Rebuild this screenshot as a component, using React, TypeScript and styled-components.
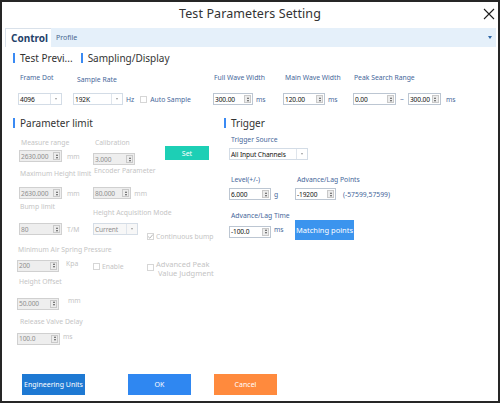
import styled, { createGlobalStyle } from "styled-components";

const GlobalStyle = createGlobalStyle`
  html, body {
    margin: 0;
    padding: 0;
    background: #fff;
  }
  body {
    font-family: "Noto Sans", "Open Sans", Arial, sans-serif;
  }
`;

const LABEL = "#46679a";
const OFF_LABEL = "#c4c4c4";

type Tone = { $off?: boolean };

const Spinner = ({ value, w, off }: { value: string; w: number; off?: boolean }) => (
  <SpinBox $w={w} $off={off}>
    <BoxText $off={off}>{value}</BoxText>
    <SpinButtons>
      <Arrow $dir="up" />
      <Arrow $dir="down" />
    </SpinButtons>
  </SpinBox>
);

const Select = ({ value, w, off }: { value: string; w: number; off?: boolean }) => (
  <SelectBox $w={w} $off={off}>
    <BoxText $off={off}>{value}</BoxText>
    <SelectArrow>
      <Arrow $dir="down" $light />
    </SelectArrow>
  </SelectBox>
);

const Check = ({ checked, ml }: { checked?: boolean; ml?: number }) => (
  <CheckBox $ml={ml}>
    {checked && (
      <svg width="7" height="7" viewBox="0 0 7 7">
        <path d="M1.2 3.6 L2.8 5.2 L5.8 1.6" fill="none" stroke="#b5b5b5" strokeWidth="1" />
      </svg>
    )}
  </CheckBox>
);

const App = () => {
  return (
    <>
      <GlobalStyle />
      <Dialog>
        <TitleBar>
          <span />
          <Title>Test Parameters Setting</Title>
          <CloseButton>
            <svg width="12" height="12" viewBox="0 0 12 12">
              <path d="M1 1 L11 11 M11 1 L1 11" stroke="#1e1e1e" strokeWidth="1.1" />
            </svg>
          </CloseButton>
        </TitleBar>

        <TabBar>
          <Tab $active>Control</Tab>
          <Tab>Profile</Tab>
          <TabSpacer />
          <TabMenu />
        </TabBar>

        <Body>
          <HeadingRow>
            <Heading>Test Previ...</Heading>
            <Heading>Sampling/Display</Heading>
          </HeadingRow>

          <SamplingRow>
            <Field>
              <Label $indent={2}>Frame Dot</Label>
              <Controls $mt={11}>
                <Select value="4096" w={44} />
              </Controls>
            </Field>
            <Field>
              <Label $indent={4} $mt={2}>Sample Rate</Label>
              <Controls $mt={9}>
                <Select value="192K" w={50} />
                <Unit $ml={3}>Hz</Unit>
                <Check ml={6} />
                <Unit $ml={3}>Auto Sample</Unit>
              </Controls>
            </Field>
            <Field>
              <Label $indent={1}>Full Wave Width</Label>
              <Controls $mt={11}>
                <Spinner value="300.00" w={40} />
                <Unit $ml={3}>ms</Unit>
              </Controls>
            </Field>
            <Field>
              <Label $indent={2}>Main Wave Width</Label>
              <Controls $mt={11}>
                <Spinner value="120.00" w={42} />
                <Unit $ml={3}>ms</Unit>
              </Controls>
            </Field>
            <Field>
              <Label $indent={1}>Peak Search Range</Label>
              <Controls $mt={11}>
                <Spinner value="0.00" w={43} />
                <Unit $ml={4}>~</Unit>
                <Unit $ml={4} />
                <Spinner value="300.00" w={33} />
                <Unit $ml={5}>ms</Unit>
              </Controls>
            </Field>
          </SamplingRow>

          <Columns>
            <LeftPanel>
              <Heading>Parameter limit</Heading>

              <LimitRow $mt={10} $pl={6} $cols="74px 54px auto">
                <Field>
                  <Label $off $indent={2}>Measure range</Label>
                  <Controls $mt={3}>
                    <Spinner value="2630.000" w={43} off />
                    <Unit $off $ml={5}>mm</Unit>
                  </Controls>
                </Field>
                <Field>
                  <Label $off $indent={2}>Calibration</Label>
                  <Controls $mt={6}>
                    <Spinner value="3.000" w={42} off />
                  </Controls>
                </Field>
                <Field>
                  <SetButton>Set</SetButton>
                </Field>
              </LimitRow>

              <LimitRow $mt={1} $pl={6} $cols="74px 54px auto">
                <Field>
                  <Label $off $indent={1} $mt={3}>Maximum Height limit</Label>
                  <Controls $mt={9}>
                    <Spinner value="2630.000" w={43} off />
                    <Unit $off $ml={5}>mm</Unit>
                  </Controls>
                </Field>
                <Field>
                  <Label $off $indent={1}>Encoder Parameter</Label>
                  <Controls $mt={12}>
                    <Spinner value="80.000" w={42} off />
                    <Unit $off $ml={3}>mm</Unit>
                  </Controls>
                </Field>
              </LimitRow>

              <LimitRow $mt={3} $pl={6} $cols="74px 54px auto">
                <Field>
                  <Label $off $indent={1}>Bump limit</Label>
                  <Controls $mt={12}>
                    <Spinner value="80" w={43} off />
                    <Unit $off $ml={5}>T/M</Unit>
                  </Controls>
                </Field>
                <Field>
                  <Label $off $mt={6}>Height Acquisition Mode</Label>
                  <Controls $mt={6}>
                    <Select value="Current" w={45} off />
                  </Controls>
                </Field>
                <Field>
                  <Controls $mt={30}>
                    <Check checked />
                    <Unit $off $ml={2}>Continuous bump</Unit>
                  </Controls>
                </Field>
              </LimitRow>

              <Block $mt={4} $pl={4}>
                <Label $off $indent={1}>Minimum Air Spring Pressure</Label>
                <LimitRow $mt={5} $pl={0} $cols="76px 54px auto">
                  <Controls>
                    <Spinner value="200" w={42} off />
                    <Unit $off $ml={7} $up={2}>Kpa</Unit>
                  </Controls>
                  <Controls $mt={3}>
                    <Check />
                    <Unit $off $ml={2}>Enable</Unit>
                  </Controls>
                  <Controls $mt={1} $top>
                    <CheckSlot>
                      <Check />
                    </CheckSlot>
                    <TwoLine>
                      <span>Advanced Peak</span>
                      <span>&nbsp;Value Judgment</span>
                    </TwoLine>
                  </Controls>
                </LimitRow>
              </Block>

              <Block $mt={0} $pl={4}>
                <Label $off $indent={2}>Height Offset</Label>
                <Controls $mt={10}>
                  <Spinner value="50.000" w={42} off />
                  <Unit $off $ml={9} $up={3}>mm</Unit>
                </Controls>
              </Block>

              <Block $mt={6} $pl={4}>
                <Label $off $indent={3}>Release Valve Delay</Label>
                <Controls $mt={6}>
                  <Spinner value="100.0" w={43} off />
                  <Unit $off $ml={3} $up={2}>ms</Unit>
                </Controls>
              </Block>
            </LeftPanel>

            <RightPanel>
              <Heading>Trigger</Heading>

              <Block $mt={7} $pl={5}>
                <Label $indent={2}>Trigger Source</Label>
                <Controls $mt={4}>
                  <Select value="All Input Channels" w={79} />
                </Controls>
              </Block>

              <TriggerRow $mt={15}>
                <Field>
                  <Label $indent={2}>Level(+/-)</Label>
                  <Controls $mt={4}>
                    <Spinner value="6.000" w={42} />
                    <Unit $ml={3}>g</Unit>
                  </Controls>
                </Field>
                <Field>
                  <Label $indent={2}>Advance/Lag Points</Label>
                  <Controls $mt={4}>
                    <Spinner value="-19200" w={41} />
                    <Unit $ml={7}>(-57599,57599)</Unit>
                  </Controls>
                </Field>
              </TriggerRow>

              <TriggerRow $mt={11}>
                <Field>
                  <Label $indent={2}>Advance/Lag Time</Label>
                  <Controls $mt={5}>
                    <Spinner value="-100.0" w={42} />
                    <Unit $ml={3} $up={2}>ms</Unit>
                  </Controls>
                </Field>
                <Field>
                  <MatchButton>Matching points</MatchButton>
                </Field>
              </TriggerRow>
            </RightPanel>
          </Columns>
        </Body>

        <Footer>
          <ActionButton $bg="#1e79d3">Engineering Units</ActionButton>
          <ActionButton $bg="#2f87f1" $ml={43}>OK</ActionButton>
          <ActionButton $bg="#ff8a3d" $ml={23}>Cancel</ActionButton>
        </Footer>
      </Dialog>
    </>
  );
};

export default App;

const Dialog = styled.div`
  width: 500px;
  height: 403px;
  box-sizing: border-box;
  border: 2px solid #262626;
  background: #fff;
  display: flex;
  flex-direction: column;
`;

const TitleBar = styled.div`
  height: 23px;
  display: grid;
  grid-template-columns: 1fr auto 1fr;
  align-items: center;
`;

const Title = styled.div`
  font-size: 12.5px;
  color: #333;
  letter-spacing: 0.1px;
`;

const CloseButton = styled.div`
  justify-self: end;
  margin-right: 3px;
  margin-top: 1px;
  display: flex;
`;

const TabBar = styled.div`
  height: 19px;
  margin: 3px 2px 0 3px;
  background: #e5f0fa;
  display: flex;
  align-items: stretch;
`;

const Tab = styled.div<{ $active?: boolean }>`
  display: flex;
  align-items: center;
  box-sizing: border-box;
  ${({ $active }) =>
    $active
      ? `
    width: 46px;
    padding-left: 5px;
    background: #fff;
    border-left: 1px solid #d9e1ea;
    border-top: 1px solid #d9e1ea;
    font-size: 10px;
    font-weight: 700;
    color: #24426a;
  `
      : `
    padding: 0 5px;
    font-size: 7px;
    color: #47678f;
  `}
`;

const TabSpacer = styled.div`
  flex: 1;
`;

const TabMenu = styled.div`
  align-self: center;
  margin-right: 4px;
  width: 0;
  height: 0;
  border-left: 2.5px solid transparent;
  border-right: 2.5px solid transparent;
  border-top: 3px solid #2f67a6;
`;

const Body = styled.div`
  padding-left: 11px;
`;

const HeadingRow = styled.div`
  margin-top: 6px;
  display: flex;
  gap: 8px;
`;

const Heading = styled.div`
  height: 10px;
  display: flex;
  align-items: center;
  border-left: 2px solid #3a8af3;
  padding-left: 5px;
  font-size: 10px;
  color: #333;
  white-space: nowrap;
`;

const SamplingRow = styled.div`
  margin-top: 10px;
  padding-left: 5px;
  display: grid;
  grid-template-columns: 55px 140px 70px 70px auto;
  align-items: start;
`;

const Field = styled.div`
  display: flex;
  flex-direction: column;
`;

const Label = styled.div<Tone & { $indent?: number; $mt?: number }>`
  height: 9px;
  line-height: 9px;
  font-size: 6.8px;
  white-space: nowrap;
  margin-left: ${({ $indent }) => $indent ?? 0}px;
  margin-top: ${({ $mt }) => $mt ?? 0}px;
  color: ${({ $off }) => ($off ? OFF_LABEL : LABEL)};
`;

const Controls = styled.div<{ $mt?: number; $top?: boolean }>`
  display: flex;
  align-items: ${({ $top }) => ($top ? "flex-start" : "center")};
  margin-top: ${({ $mt }) => $mt ?? 0}px;
`;

const Unit = styled.span<Tone & { $ml?: number; $up?: number }>`
  font-size: 6.8px;
  line-height: 9px;
  white-space: nowrap;
  margin-left: ${({ $ml }) => $ml ?? 0}px;
  margin-bottom: ${({ $up }) => ($up ?? 0) * 2}px;
  color: ${({ $off }) => ($off ? OFF_LABEL : LABEL)};
`;

const SpinBox = styled.div<Tone & { $w: number }>`
  width: ${({ $w }) => $w}px;
  height: 12px;
  box-sizing: border-box;
  border: 1px solid ${({ $off }) => ($off ? "#d0d0d0" : "#bcc6d2")};
  background: ${({ $off }) => ($off ? "#eeeeee" : "#fff")};
  display: flex;
  align-items: stretch;
  padding: 1px 1px 1px 0;
`;

const SelectBox = styled(SpinBox)`
  padding: 0;
  border-color: ${({ $off }) => ($off ? "#d5dde6" : "#d3dce6")};
  background: ${({ $off }) => ($off ? "#f7f7f7" : "#fff")};
`;

const BoxText = styled.span<Tone>`
  flex: 1;
  min-width: 0;
  overflow: hidden;
  white-space: nowrap;
  padding-left: 1px;
  font-size: 6.6px;
  line-height: 9px;
  letter-spacing: -0.1px;
  display: flex;
  align-items: center;
  color: ${({ $off }) => ($off ? "#8e8e8e" : "#111")};
`;

const SpinButtons = styled.span`
  width: 7px;
  flex-shrink: 0;
  box-sizing: border-box;
  border: 1px solid #c9c9c9;
  background: #ececec;
  display: flex;
  flex-direction: column;
  align-items: center;
  justify-content: center;
  gap: 1px;
`;

const SelectArrow = styled.span`
  width: 10px;
  flex-shrink: 0;
  border-left: 1px solid #dfe5ec;
  display: flex;
  align-items: center;
  justify-content: center;
`;

const Arrow = styled.span<{ $dir: "up" | "down"; $light?: boolean }>`
  width: 0;
  height: 0;
  border-left: 1.5px solid transparent;
  border-right: 1.5px solid transparent;
  ${({ $dir, $light }) =>
    $dir === "up"
      ? `border-bottom: 2px solid ${$light ? "#9a9a9a" : "#555"};`
      : `border-top: 2px solid ${$light ? "#9a9a9a" : "#555"};`}
`;

const CheckBox = styled.span<{ $ml?: number }>`
  width: 7px;
  height: 7px;
  flex-shrink: 0;
  box-sizing: border-box;
  border: 1px solid #d6d6d6;
  background: #fff;
  margin-left: ${({ $ml }) => $ml ?? 0}px;
  display: flex;
  align-items: center;
  justify-content: center;
  svg {
    margin: -1px;
  }
`;

const CheckSlot = styled.span`
  margin-top: 4px;
`;

const TwoLine = styled.span`
  display: flex;
  flex-direction: column;
  margin-left: 2px;
  font-size: 7.5px;
  line-height: 8.5px;
  color: ${OFF_LABEL};
  white-space: nowrap;
`;

const Columns = styled.div`
  margin-top: 13px;
  display: grid;
  grid-template-columns: 211px auto;
`;

const LeftPanel = styled.div`
  display: flex;
  flex-direction: column;
`;

const RightPanel = styled.div`
  display: flex;
  flex-direction: column;
`;

const LimitRow = styled.div<{ $mt: number; $pl: number; $cols: string }>`
  margin-top: ${({ $mt }) => $mt}px;
  padding-left: ${({ $pl }) => $pl}px;
  display: grid;
  grid-template-columns: ${({ $cols }) => $cols};
  align-items: start;
`;

const Block = styled.div<{ $mt: number; $pl: number }>`
  margin-top: ${({ $mt }) => $mt}px;
  padding-left: ${({ $pl }) => $pl}px;
  display: flex;
  flex-direction: column;
`;

const TriggerRow = styled.div<{ $mt: number }>`
  margin-top: ${({ $mt }) => $mt}px;
  padding-left: 5px;
  display: grid;
  grid-template-columns: 66px auto;
  align-items: start;
`;

const SetButton = styled.button`
  margin: 8px 0 0 18px;
  width: 44px;
  height: 14px;
  padding: 0;
  border: none;
  background: #1dcfb5;
  color: #fff;
  font-family: inherit;
  font-size: 7px;
`;

const MatchButton = styled.button`
  margin-top: 9px;
  width: 59px;
  height: 20px;
  padding: 0;
  border: none;
  background: #3b94ee;
  color: #fff;
  font-family: inherit;
  font-size: 7.5px;
`;

const Footer = styled.div`
  margin-top: auto;
  padding: 0 0 6px 20px;
  display: flex;
`;

const ActionButton = styled.button<{ $bg: string; $ml?: number }>`
  width: 63px;
  height: 21px;
  padding: 0;
  margin-left: ${({ $ml }) => $ml ?? 0}px;
  border: none;
  background: ${({ $bg }) => $bg};
  color: #fff;
  font-family: inherit;
  font-size: 7px;
`;
